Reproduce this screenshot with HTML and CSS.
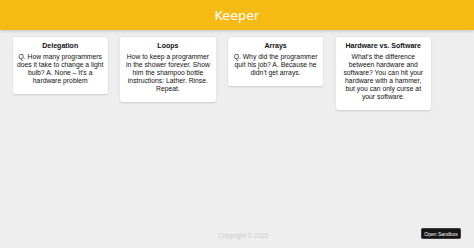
FILE: index.html
```html
<!DOCTYPE html>
<html lang="en">
<head>
<meta charset="utf-8">
<title>Keeper</title>
<link rel="stylesheet" href="styles.css">
</head>
<body>
<header class="header">
  <h1 class="logo">Keeper</h1>
</header>
<main class="notes">
  <div class="note">
    <h2 class="note-title">Delegation</h2>
    <p class="note-text">Q. How many programmers does it take to change a light bulb? A. None – It's a hardware problem</p>
  </div>
  <div class="note">
    <h2 class="note-title">Loops</h2>
    <p class="note-text">How to keep a programmer in the shower forever. Show him the shampoo bottle instructions: Lather. Rinse. Repeat.</p>
  </div>
  <div class="note">
    <h2 class="note-title">Arrays</h2>
    <p class="note-text">Q. Why did the programmer quit his job? A. Because he didn't get arrays.</p>
  </div>
  <div class="note">
    <h2 class="note-title">Hardware vs. Software</h2>
    <p class="note-text">What's the difference between hardware and software? You can hit your hardware with a hammer, but you can only curse at your software.</p>
  </div>
</main>
<footer class="footer">
  <p class="copyright">Copyright © 2023</p>
</footer>
<a class="sandbox-btn">Open Sandbox</a>
</body>
</html>
```

FILE: styles.css
```css
* {
  margin: 0;
  padding: 0;
  box-sizing: border-box;
}

html {
  font-family: "Liberation Sans", Arial, sans-serif;
}

body {
  background: #eeeeee;
  padding: 0 6.4px;
  min-height: 248px;
  position: relative;
  overflow: hidden;
}

.header {
  background-color: #f5ba13;
  margin: 0 -6.4px;
  padding: 7.3px 12.8px 5.3px;
  box-shadow: 0 0 4px 0 rgba(0, 0, 0, 0.3);
  text-align: center;
}

.logo {
  color: #fff;
  font-family: "DejaVu Sans", sans-serif;
  font-weight: 400;
  font-size: 12.8px;
  line-height: 17px;
}

.notes {
  display: flex;
  flex-wrap: wrap;
  align-items: flex-start;
}

.note {
  background: #fff;
  border-radius: 2.8px;
  box-shadow: 0 0.8px 2px #ccc;
  padding: 5px 4px;
  width: 95.3px;
  margin: 7px 6.2px;
  text-align: center;
  color: #111;
}

.note-title {
  font-size: 7.04px;
  font-weight: 700;
  line-height: 8.1px;
  margin-bottom: 3px;
}

.note-text {
  font-size: 6.8px;
  line-height: 8px;
  margin-bottom: 4px;
  word-wrap: break-word;
}

.footer {
  position: absolute;
  left: 6.4px;
  bottom: 0;
  width: 100%;
  height: 16px;
  text-align: center;
}

.copyright {
  color: #ccc;
  font-size: 6.4px;
  line-height: 7.4px;
}

.sandbox-btn {
  position: fixed;
  right: 13px;
  bottom: 9px;
  width: 40px;
  height: 11.5px;
  background: #151515;
  border: 0.5px solid #3a3a3a;
  border-radius: 1.5px;
  color: #fff;
  font-size: 5px;
  line-height: 10.5px;
  text-align: center;
  white-space: nowrap;
}
```
